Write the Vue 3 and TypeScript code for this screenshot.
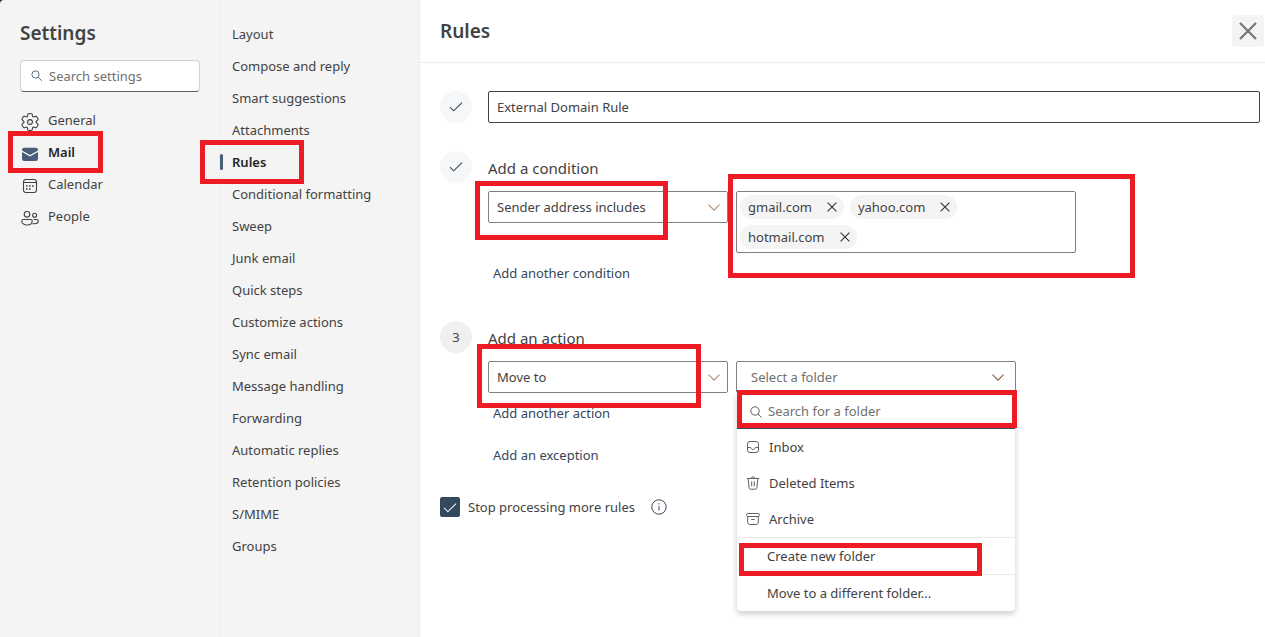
<script setup lang="ts">
import { ref } from 'vue'

type IconName = 'gear' | 'mail' | 'calendar' | 'people'

interface Section {
  label: string
  icon: IconName
}

const sections: Section[] = [
  { label: 'General', icon: 'gear' },
  { label: 'Mail', icon: 'mail' },
  { label: 'Calendar', icon: 'calendar' },
  { label: 'People', icon: 'people' },
]
const pages: string[] = [
  'Layout', 'Compose and reply', 'Smart suggestions', 'Attachments', 'Rules',
  'Conditional formatting', 'Sweep', 'Junk email', 'Quick steps',
  'Customize actions', 'Sync email', 'Message handling', 'Forwarding',
  'Automatic replies', 'Retention policies', 'S/MIME', 'Groups',
]
const activeSection = ref('Mail')
const activePage = ref('Rules')
const ruleName = ref('External Domain Rule')
const settingsQuery = ref('')
const folderQuery = ref('')
const stopProcessing = ref(true)
const domains = ref<string[]>(['gmail.com', 'yahoo.com', 'hotmail.com'])
const folders: string[] = ['Inbox', 'Deleted Items', 'Archive']

function removeDomain(domain: string): void {
  domains.value = domains.value.filter((d) => d !== domain)
}
</script>

<template>
  <div class="page">
    <aside class="sections">
      <h1 class="title">Settings</h1>
      <label class="search">
        <svg width="12" height="12" viewBox="0 0 12 12" fill="none" stroke="#5a6f88"><circle cx="4.5" cy="4.5" r="3.6" /><path d="M7.200 7.200l3.600 3.600" /></svg>
        <input v-model="settingsQuery" type="text" placeholder="Search settings" aria-label="Search settings" />
      </label>
      <nav class="section-list" aria-label="Settings sections">
        <a
          v-for="s in sections"
          :key="s.label"
          href="#"
          class="section"
          :class="{ active: s.label === activeSection }"
          @click.prevent="activeSection = s.label"
        >
          <svg v-if="s.icon === 'gear'" class="section-icon" viewBox="0 0 20 20" fill="none" stroke="#424242" stroke-width="1.1" stroke-linejoin="round">
            <path d="M1.91 7.38A8.5 8.5 0 0 1 3.7 4.3a.5.5 0 0 1 .54-.13l1.92.68a1 1 0 0 0 1.32-.76l.36-2a.5.5 0 0 1 .4-.4 8.53 8.53 0 0 1 3.55 0c.2.04.35.2.38.4l.37 2a1 1 0 0 0 1.32.76l1.92-.68a.5.5 0 0 1 .54.13 8.5 8.5 0 0 1 1.78 3.08c.06.2 0 .4-.15.54l-1.56 1.32a1 1 0 0 0 0 1.520l1.56 1.320a.5.5 0 0 1 .15.54 8.5 8.5 0 0 1-1.78 3.080.5.5 0 0 1-.54.130l-1.920-.680a1 1 0 0 0-1.320.760l-.370 2.010a.5.5 0 0 1-.390.400 8.530 8.530 0 0 1-3.550 0 .5.5 0 0 1-.390-.400l-.360-2.010a1 1 0 0 0-1.320-.760l-1.920.680a.5.5 0 0 1-.540-.130 8.500 8.500 0 0 1-1.780-3.080.5.5 0 0 1 .150-.540l1.560-1.320a1 1 0 0 0 0-1.520L2.060 7.920a.5.5 0 0 1-.150-.540z" />
            <circle cx="10" cy="10" r="2.400" />
          </svg>
          <svg v-else-if="s.icon === 'mail'" class="section-icon" viewBox="0 0 20 20" fill="#475d78">
            <path d="M2 6.600l8 4.500 8-4.500V5.900a2.200 2.200 0 0 0-2.200-2.200H4.200A2.200 2.200 0 0 0 2 5.900z" />
            <path d="M2 7.900v6.800a2.200 2.200 0 0 0 2.200 2.200h11.600a2.200 2.200 0 0 0 2.200-2.200V7.900l-8 4.500z" />
          </svg>
          <svg v-else-if="s.icon === 'calendar'" class="section-icon" viewBox="0 0 20 20" fill="none" stroke="#424242" stroke-width="1.100">
            <rect x="3.500" y="3.500" width="13" height="13" rx="2.500" />
            <path d="M3.500 6.500h13" />
            <path d="M6 10h2M9 10h2M12 10h2M6 13h2M9 13h2" stroke-width="1.600" stroke-dasharray="1.600 1.400" />
          </svg>
          <svg v-else class="section-icon" viewBox="0 0 20 20" fill="none" stroke="#424242" stroke-width="1.100">
            <circle cx="7" cy="6.300" r="2.800" /><circle cx="14.600" cy="7.200" r="2" />
            <path d="M3.200 11.500h7.600c.8 0 1.400.6 1.400 1.400 0 2.500-2.200 4.100-5.200 4.100s-5.200-1.600-5.200-4.100c0-.8.600-1.400 1.400-1.400zM13.700 11.500h3.200c.8 0 1.400.6 1.400 1.300 0 1.800-1.500 3-4 3-.7 0-1.200-.1-1.700-.2" />
          </svg>
          <span>{{ s.label }}</span>
          <span v-if="s.label === 'Mail'" class="mark mark-mail" aria-hidden="true"></span>
        </a>
      </nav>
    </aside>

    <nav class="pages" aria-label="Mail settings">
      <a
        v-for="p in pages"
        :key="p"
        href="#"
        class="page-link"
        :class="{ active: p === activePage }"
        @click.prevent="activePage = p"
      >
        {{ p }}
        <span v-if="p === 'Rules'" class="mark mark-rules" aria-hidden="true"></span>
      </a>
    </nav>

    <main class="content">
      <header class="header">
        <h2 class="title">Rules</h2>
        <button class="close" type="button" aria-label="Close">
          <svg width="18" height="18" viewBox="0 0 18 18" fill="none" stroke="#757575" stroke-width="2.200"><path d="M1 1l16 16M17 1L1 17" /></svg>
        </button>
      </header>

      <form class="form" @submit.prevent>
        <section class="step">
          <span class="badge">
            <svg width="14" height="10" viewBox="0 0 14 10" fill="none" stroke="#3b4a5c" stroke-width="1.100"><path d="M1 5.200l3.700 3.600L13 .7" /></svg>
          </span>
          <input v-model="ruleName" class="name" type="text" aria-label="Rule name" />
        </section>

        <section class="step step-condition">
          <span class="badge">
            <svg width="14" height="10" viewBox="0 0 14 10" fill="none" stroke="#3b4a5c" stroke-width="1.100"><path d="M1 5.200l3.700 3.600L13 .7" /></svg>
          </span>
          <div class="step-body">
            <h3 class="step-title">Add a condition</h3>
            <div class="fields">
              <div class="select-wrap">
                <select aria-label="Condition"><option>Sender address includes</option></select>
                <svg class="chevron" viewBox="0 0 12 7" fill="none" stroke="#b08d78" stroke-width="1.100"><path d="M.5.700L6 6.200 11.500.7" /></svg>
                <span class="mark mark-condition" aria-hidden="true"></span>
              </div>
              <div class="chips">
                <span v-for="d in domains" :key="d" class="chip">
                  <span>{{ d }}</span>
                  <button type="button" :aria-label="`Remove ${d}`" @click="removeDomain(d)">
                    <svg width="10" height="10" viewBox="0 0 10 10" fill="none" stroke="#333" stroke-width="1.100"><path d="M.6.600l8.800 8.800M9.400.6L.6 9.400" /></svg>
                  </button>
                </span>
                <span class="mark mark-chips" aria-hidden="true"></span>
              </div>
            </div>
            <button class="add" type="button">Add another condition</button>
          </div>
        </section>

        <section class="step step-action">
          <span class="badge badge-number">3</span>
          <div class="step-body">
            <h3 class="step-title">Add an action</h3>
            <div class="fields">
              <div class="select-wrap">
                <select aria-label="Action"><option>Move to</option></select>
                <svg class="chevron" viewBox="0 0 12 7" fill="none" stroke="#b08d78" stroke-width="1.100"><path d="M.5.700L6 6.200 11.500.7" /></svg>
                <span class="mark mark-action" aria-hidden="true"></span>
              </div>
              <div class="select-wrap folder">
                <select aria-label="Folder"><option>Select a folder</option></select>
                <svg class="chevron" viewBox="0 0 12 7" fill="none" stroke="#8a5a3c" stroke-width="1.100"><path d="M.5.700L6 6.200 11.500.7" /></svg>
                <div class="menu">
                  <label class="menu-search">
                    <svg width="12" height="14" viewBox="0 0 12 14" fill="none" stroke="#616161"><circle cx="5" cy="7" r="4.200" /><path d="M8 10l3.600 3.600" /></svg>
                    <input v-model="folderQuery" type="text" placeholder="Search for a folder" aria-label="Search for a folder" />
                    <span class="mark mark-search" aria-hidden="true"></span>
                  </label>
                  <button v-for="f in folders" :key="f" type="button" class="menu-item">
                    <svg v-if="f === 'Inbox'" viewBox="0 0 14 14" fill="none" stroke="#616161">
                      <rect x="1.500" y="1.500" width="11" height="11" rx="2.500" /><path d="M1.500 7.500h3.200c.3 1.300 1.100 2 2.300 2s2-.7 2.300-2h3.200" />
                    </svg>
                    <svg v-else-if="f === 'Deleted Items'" viewBox="0 0 14 14" fill="none" stroke="#616161">
                      <path d="M.8 2.500h12.400M5.300 2.500a1.700 1.700 0 0 1 3.400 0M2.200 2.500l.9 9.300c.1.900.6 1.400 1.400 1.400h5c.8 0 1.300-.5 1.400-1.400l.9-9.300M5.700 5.300v5M8.300 5.300v5" />
                    </svg>
                    <svg v-else viewBox="0 0 14 14" fill="none" stroke="#616161">
                      <rect x=".7" y="1.500" width="12.600" height="3" rx=".8" /><path d="M1.700 4.500v5.700c0 1.300.9 2.300 2.300 2.300h6c1.400 0 2.300-1 2.300-2.300V4.500M5.200 7.500h3.600" />
                    </svg>
                    <span>{{ f }}</span>
                  </button>
                  <button type="button" class="menu-command">
                    Create new folder
                    <span class="mark mark-create" aria-hidden="true"></span>
                  </button>
                  <button type="button" class="menu-command">Move to a different folder...</button>
                </div>
              </div>
            </div>
            <button class="add" type="button">Add another action</button>
            <button class="add add-exception" type="button">Add an exception</button>
          </div>
        </section>

        <div class="stop">
          <input id="stop" v-model="stopProcessing" type="checkbox" />
          <label for="stop">Stop processing more rules</label>
          <svg width="16" height="16" viewBox="0 0 16 16" fill="none" stroke="#3b4a5c"><circle cx="8" cy="8" r="7.200" /><path d="M8 7v4.500M8 4.200v1.300" /></svg>
        </div>
      </form>
    </main>
  </div>
</template>

<style>
html {
  background: #222;
}
body {
  margin: 0;
}
</style>

<style scoped>
.page,
.page * {
  box-sizing: border-box;
}
.page {
  display: grid;
  grid-template-columns: 219px 201px 1fr;
  min-height: 100vh;
  overflow: hidden;
  border-top-left-radius: 4px;
  background: #f4f4f4;
  color: #424242;
  font: 13px/20px "Noto Sans", "Open Sans", sans-serif;
}
.page input,
.page select,
.page button {
  font: inherit;
  color: inherit;
}
.page svg {
  flex: none;
}
a {
  color: inherit;
  text-decoration: none;
}
button {
  border: 0;
  padding: 0;
  background: none;
  text-align: left;
}
::placeholder {
  color: #707070;
  opacity: 1;
}
.title {
  margin: 0;
  font-size: 19px;
  line-height: 30px;
  font-weight: 600;
}
.sections {
  padding: 18px 19px 0 20px;
}
.search {
  display: flex;
  align-items: center;
  gap: 6px;
  height: 32px;
  margin-top: 12px;
  padding: 0 10px;
  border: 1px solid #d1d1d1;
  border-bottom-color: #616161;
  border-radius: 4px;
  background: #fff;
}
.search input,
.menu-search input {
  flex: 1;
  min-width: 0;
  padding: 0;
  border: 0;
  outline: 0;
  background: none;
}
.section-list {
  margin-top: 12px;
}
.section {
  position: relative;
  display: flex;
  align-items: center;
  gap: 8px;
  height: 32px;
}
.section-icon {
  width: 20px;
  height: 20px;
  margin-top: 3px;
}
.active {
  color: #242424;
  font-weight: 600;
}
.pages {
  padding: 18px 0 0;
  border-left: 1px solid #ededed;
  border-right: 1px solid #ededed;
}
.page-link {
  position: relative;
  display: flex;
  align-items: center;
  height: 32px;
  padding-left: 12px;
}
.page-link.active::before {
  content: "";
  position: absolute;
  left: 0;
  top: 8px;
  width: 3px;
  height: 16px;
  border-radius: 2px;
  background: #475d78;
}
.content {
  background: #fff;
}
.header {
  display: flex;
  align-items: center;
  justify-content: space-between;
  height: 63px;
  padding: 0 1px 0 20px;
  border-bottom: 1px solid #ededed;
}
.close {
  display: flex;
  align-items: center;
  justify-content: center;
  width: 32px;
  height: 32px;
  border-radius: 4px;
  background: #f4f4f4;
}
.form {
  padding: 28px 5px 0 20px;
}
.step {
  display: flex;
  align-items: flex-start;
  gap: 16px;
}
.step-condition {
  margin-top: 28px;
}
.step-action {
  margin-top: 32px;
}
.badge {
  display: flex;
  flex: none;
  align-items: center;
  justify-content: center;
  width: 32px;
  height: 32px;
  border-radius: 50%;
  background: #f5f7f9;
}
.badge-number {
  background: #f0f0f0;
  font-size: 13px;
  line-height: 22px;
}
.name {
  flex: 1;
  min-width: 0;
  height: 32px;
  padding: 0 8px;
  border: 1px solid #424242;
  border-radius: 2px;
  background: #fff;
}
.step-body {
  flex: 1;
}
.step-title {
  height: 40px;
  margin: 0;
  font-size: 15px;
  line-height: 34px;
  font-weight: 400;
}
.fields {
  display: flex;
  align-items: flex-start;
  gap: 8px;
}
.select-wrap {
  position: relative;
  display: grid;
  grid-template-columns: 240px;
}
.folder {
  grid-template-columns: 280px;
}
select {
  appearance: none;
  height: 32px;
  padding: 0 32px 0 8px;
  border: 1px solid #808080;
  border-radius: 2px;
  background: #fff;
}
.page .folder select {
  padding-left: 14px;
  color: #707070;
}
.chevron {
  position: absolute;
  right: 8px;
  top: 13px;
  width: 12px;
  height: 7px;
  pointer-events: none;
}
.folder .chevron {
  right: 12px;
}
.chips {
  position: relative;
  display: flex;
  flex-wrap: wrap;
  gap: 6px;
  width: 340px;
  padding: 3px 60px 3px 3px;
  border: 1px solid #808080;
  border-radius: 2px;
}
.chip {
  display: flex;
  align-items: center;
  gap: 8px;
  height: 24px;
  padding-left: 8px;
  border-radius: 12px;
  background: #f4f4f4;
}
.chip button {
  display: flex;
  align-items: center;
  justify-content: center;
  width: 24px;
  height: 24px;
}
.add {
  display: block;
  height: 32px;
  margin-top: 4px;
  padding: 0 5px;
}
.page .add {
  color: #34465a;
}
.add-exception {
  margin-top: 10px;
}
.stop {
  display: flex;
  align-items: center;
  gap: 8px;
  margin-top: 26px;
}
.stop input {
  appearance: none;
  width: 20px;
  height: 20px;
  margin: 0;
  border: 1px solid #34495e;
  border-radius: 2px;
}
.stop input:checked {
  background: #34495e;
}
.stop input:checked::before {
  content: "";
  display: block;
  width: 11px;
  height: 5px;
  margin: 5px 0 0 3px;
  border: solid #fff;
  border-width: 0 0 1px 1px;
  transform: rotate(-45deg);
}
.stop svg {
  margin-left: 8px;
}
.menu {
  position: absolute;
  z-index: 1;
  left: 1px;
  right: 1px;
  top: 32px;
  border-radius: 0 0 4px 4px;
  background: #fff;
  box-shadow: 0 3px 6px rgba(0, 0, 0, 0.2);
}
.menu-search {
  position: relative;
  display: flex;
  align-items: center;
  gap: 6px;
  height: 36px;
  padding: 0 13px;
  border-bottom: 1px solid #34495e;
}
.menu-item {
  display: flex;
  align-items: center;
  gap: 9px;
  width: 100%;
  height: 36px;
  padding: 0 9px;
}
.menu-item svg {
  width: 14px;
  height: 14px;
}
.menu-command {
  position: relative;
  display: block;
  width: 100%;
  height: 37px;
  padding-left: 30px;
  border-top: 1px solid #ebebeb;
}
/* Call-out frames */
.mark {
  position: absolute;
  z-index: 2;
  border: 5px solid #ed1c24;
  pointer-events: none;
}
.mark-mail {
  left: -12px;
  top: -5px;
  width: 95px;
  height: 42px;
}
.mark-rules {
  left: -20px;
  top: -6px;
  width: 104px;
  height: 44px;
}
.mark-condition {
  left: -13px;
  top: -10px;
  width: 193px;
  height: 59px;
}
.mark-chips {
  left: -9px;
  top: -18px;
  width: 407px;
  height: 104px;
}
.mark-action {
  left: -11px;
  top: -17px;
  width: 224px;
  height: 64px;
}
.mark-search {
  left: 0;
  top: -3px;
  width: 280px;
  height: 38px;
}
.mark-create {
  left: 2px;
  top: 5px;
  width: 243px;
  height: 33px;
}
</style>
